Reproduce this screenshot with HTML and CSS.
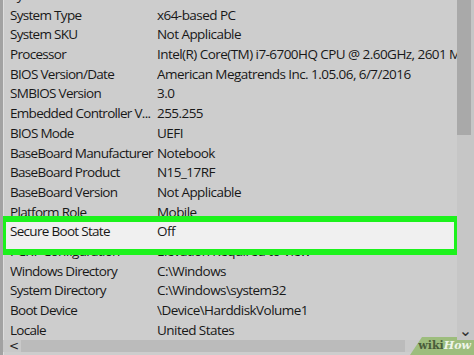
FILE: index.html
```html
<!DOCTYPE html>
<html>
<head>
<meta charset="utf-8">
<link rel="stylesheet" href="styles.css">
</head>
<body>
<div class="window">
  <div class="list">
    <div class="row"><span class="k">System Model</span><span class="v">GL502VM</span></div>
    <div class="row"><span class="k">System Type</span><span class="v">x64-based PC</span></div>
    <div class="row"><span class="k">System SKU</span><span class="v">Not Applicable</span></div>
    <div class="row"><span class="k">Processor</span><span class="v">Intel(R) Core(TM) i7-6700HQ CPU @ 2.60GHz, 2601 Mhz, 4 Core(s)</span></div>
    <div class="row"><span class="k">BIOS Version/Date</span><span class="v">American Megatrends Inc. 1.05.06, 6/7/2016</span></div>
    <div class="row"><span class="k">SMBIOS Version</span><span class="v">3.0</span></div>
    <div class="row"><span class="k">Embedded Controller V...</span><span class="v">255.255</span></div>
    <div class="row"><span class="k">BIOS Mode</span><span class="v">UEFI</span></div>
    <div class="row"><span class="k">BaseBoard Manufacturer</span><span class="v">Notebook</span></div>
    <div class="row"><span class="k">BaseBoard Product</span><span class="v">N15_17RF</span></div>
    <div class="row"><span class="k">BaseBoard Version</span><span class="v">Not Applicable</span></div>
    <div class="row"><span class="k">Platform Role</span><span class="v">Mobile</span></div>
    <div class="row highlight"><span class="k">Secure Boot State</span><span class="v">Off</span></div>
    <div class="row"><span class="k">PCR7 Configuration</span><span class="v">Elevation Required to View</span></div>
    <div class="row"><span class="k">Windows Directory</span><span class="v">C:\Windows</span></div>
    <div class="row"><span class="k">System Directory</span><span class="v">C:\Windows\system32</span></div>
    <div class="row"><span class="k">Boot Device</span><span class="v">\Device\HarddiskVolume1</span></div>
    <div class="row"><span class="k">Locale</span><span class="v">United States</span></div>
  </div>
  <div class="vscroll">
    <div class="vthumb"></div>
    <div class="vspace"></div>
    <div class="arrow-down">&#8964;</div>
  </div>
  <div class="hscroll">
    <div class="arrow-left">&lt;</div>
    <div class="hthumb"></div>
  </div>
  <div class="corner"></div>
  <div class="logo"><span class="wiki">wiki</span><span class="how">How</span></div>
</div>
</body>
</html>
```
FILE: styles.css
```css
html, body {
  margin: 0;
  padding: 0;
}
body {
  width: 474px;
  height: 355px;
  overflow: hidden;
  background: #cdcdcd;
  font-family: "Open Sans", "Noto Sans", sans-serif;
}
.window {
  position: relative;
  display: grid;
  grid-template-columns: 1fr 17px;
  grid-template-rows: 340px 12px;
  height: 355px;
  border-left: 3px solid #a2a2a2;
  box-shadow: inset 1px 0 0 #dedede;
  box-sizing: border-box;
}
.list {
  overflow: hidden;
}
.list > .row:first-child {
  margin-top: -14px;
}
.row {
  display: grid;
  grid-template-columns: 147px auto;
  height: 19.7px;
  line-height: 19.7px;
  font-size: 13.5px;
  color: #181818;
  padding-left: 7px;
  white-space: nowrap;
}
.row span {
  overflow: hidden;
}
.k {
  letter-spacing: -0.7px;
}
.v {
  letter-spacing: -0.55px;
}
.highlight {
  position: relative;
  z-index: 2;
}
.highlight::before {
  content: "";
  position: absolute;
  z-index: -1;
  top: -6.4px;
  bottom: -12.9px;
  left: -3px;
  right: -3px;
  background: #f0f0f0;
  border: 6px solid #1cf21c;
}
.vscroll {
  position: relative;
  z-index: 3;
  display: flex;
  flex-direction: column;
  align-items: center;
  background: #c6c6c6;
}
.vthumb {
  width: 14px;
  height: 135px;
  align-self: flex-start;
  background: #a9a9a9;
}
.vspace {
  flex: 1;
}
.arrow-down {
  font-size: 16px;
  line-height: 10px;
  height: 14px;
  color: #333;
  font-family: "DejaVu Sans", sans-serif;
}
.hscroll {
  display: flex;
  align-items: center;
  background: #c9c9c9;
}
.arrow-left {
  width: 12px;
  padding-left: 6px;
  font-size: 12px;
  line-height: 12px;
  color: #222;
  font-family: "DejaVu Sans", sans-serif;
}
.hthumb {
  width: 384px;
  height: 12px;
  background: #bbbbbb;
}
.corner {
  background: #cdcdcd;
}
.logo {
  position: absolute;
  right: 0;
  bottom: 0;
  width: 64px;
  height: 18px;
  background: #9dbd7d;
  clip-path: polygon(12px 0, 100% 0, 100% 100%, 0 100%);
  font-family: "DejaVu Serif", serif;
  font-weight: bold;
  font-size: 11px;
  line-height: 18px;
  text-align: right;
  padding-right: 3px;
  box-sizing: border-box;
}
.wiki {
  color: #4a5d3a;
}
.how {
  color: #eef5e8;
  font-style: italic;
}
```
